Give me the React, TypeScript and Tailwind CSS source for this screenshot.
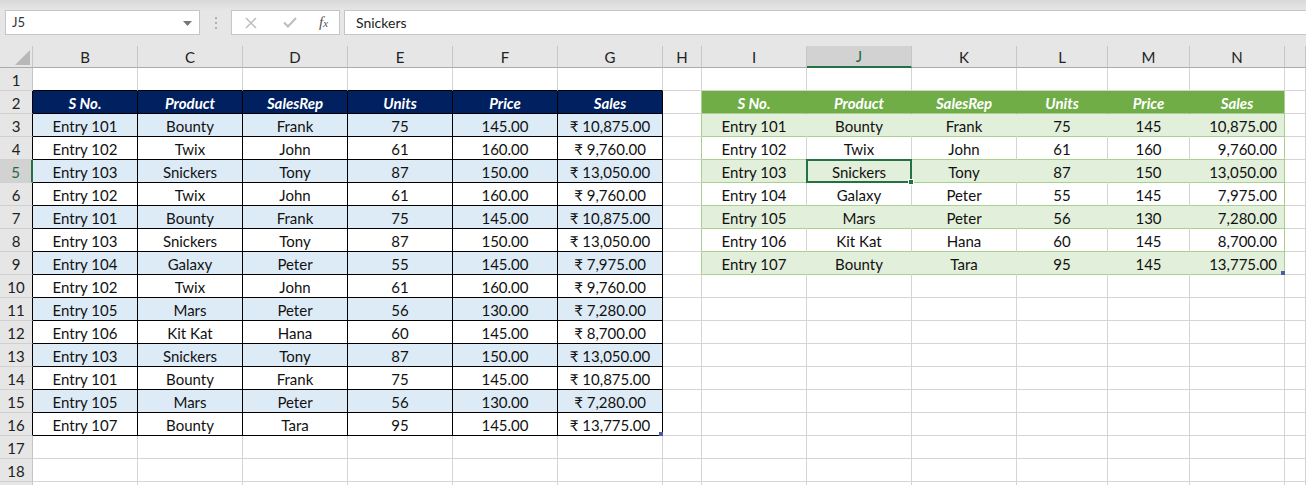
import React from 'react';

// ─── Data ───────────────────────────────────────────────────────

const COLS = [
  { key: 'B', w: 'w-[105px]' },
  { key: 'C', w: 'w-[105px]' },
  { key: 'D', w: 'w-[105px]' },
  { key: 'E', w: 'w-[105px]' },
  { key: 'F', w: 'w-[105px]' },
  { key: 'G', w: 'w-[105px]' },
  { key: 'H', w: 'w-[39px]' },
  { key: 'I', w: 'w-[105px]' },
  { key: 'J', w: 'w-[105px]' },
  { key: 'K', w: 'w-[105px]' },
  { key: 'L', w: 'w-[91px]' },
  { key: 'M', w: 'w-[82px]' },
  { key: 'N', w: 'w-[95px]' },
  { key: '', w: 'flex-1' },
];

const HEADERS = ['S No.', 'Product', 'SalesRep', 'Units', 'Price', 'Sales'];

const LEFT: string[][] = [
  ['Entry 101', 'Bounty', 'Frank', '75', '145.00', '₹ 10,875.00'],
  ['Entry 102', 'Twix', 'John', '61', '160.00', '₹ 9,760.00'],
  ['Entry 103', 'Snickers', 'Tony', '87', '150.00', '₹ 13,050.00'],
  ['Entry 102', 'Twix', 'John', '61', '160.00', '₹ 9,760.00'],
  ['Entry 101', 'Bounty', 'Frank', '75', '145.00', '₹ 10,875.00'],
  ['Entry 103', 'Snickers', 'Tony', '87', '150.00', '₹ 13,050.00'],
  ['Entry 104', 'Galaxy', 'Peter', '55', '145.00', '₹ 7,975.00'],
  ['Entry 102', 'Twix', 'John', '61', '160.00', '₹ 9,760.00'],
  ['Entry 105', 'Mars', 'Peter', '56', '130.00', '₹ 7,280.00'],
  ['Entry 106', 'Kit Kat', 'Hana', '60', '145.00', '₹ 8,700.00'],
  ['Entry 103', 'Snickers', 'Tony', '87', '150.00', '₹ 13,050.00'],
  ['Entry 101', 'Bounty', 'Frank', '75', '145.00', '₹ 10,875.00'],
  ['Entry 105', 'Mars', 'Peter', '56', '130.00', '₹ 7,280.00'],
  ['Entry 107', 'Bounty', 'Tara', '95', '145.00', '₹ 13,775.00'],
];

const RIGHT: string[][] = [
  ['Entry 101', 'Bounty', 'Frank', '75', '145', '10,875.00'],
  ['Entry 102', 'Twix', 'John', '61', '160', '9,760.00'],
  ['Entry 103', 'Snickers', 'Tony', '87', '150', '13,050.00'],
  ['Entry 104', 'Galaxy', 'Peter', '55', '145', '7,975.00'],
  ['Entry 105', 'Mars', 'Peter', '56', '130', '7,280.00'],
  ['Entry 106', 'Kit Kat', 'Hana', '60', '145', '8,700.00'],
  ['Entry 107', 'Bounty', 'Tara', '95', '145', '13,775.00'],
];

// row 19 only peeks in at the bottom edge, so it carries no label
const ROWS = Array.from({ length: 19 }, (_, i) => i + 1);

// ─── Cell rules ─────────────────────────────────────────────────

function cellSpec(r: number, c: number): { text: string; cls: string } {
  const inLeft = c <= 5;
  const inRight = c >= 7 && c <= 12;

  if (inLeft) {
    if (r === 1) return { text: '', cls: 'border-r-[#d4d4d4] border-b-black' };
    if (r === 2)
      return {
        text: HEADERS[c],
        cls: 'bg-[#002060] border-black text-white font-bold italic justify-center',
      };
    if (r <= 16) {
      const bg = r % 2 === 1 ? 'bg-[#ddebf7]' : 'bg-white';
      return { text: LEFT[r - 3][c], cls: `${bg} border-black justify-center` };
    }
  }

  if (c === 6 && r >= 2 && r <= 9)
    return { text: '', cls: 'border-r-[#a9d08e] border-b-[#d4d4d4]' };

  if (inRight && r >= 2 && r <= 9) {
    const i = c - 7;
    const last = i === 5;
    if (r === 2)
      return {
        text: HEADERS[i],
        cls: `bg-[#70ad47] border-b-[#a9d08e] text-white font-bold italic justify-center ${last ? 'border-r-[#a9d08e]' : 'border-r-[#70ad47]'}`,
      };
    const odd = r % 2 === 1;
    const fill = odd ? 'bg-[#e2efda]' : 'bg-white';
    const side = last ? 'border-r-[#a9d08e]' : odd ? 'border-r-[#e2efda]' : 'border-r-[#d4d4d4]';
    const align = last ? 'justify-end pr-[7px]' : 'justify-center';
    return { text: RIGHT[r - 3][i], cls: `${fill} ${side} border-b-[#a9d08e] ${align}` };
  }

  return { text: '', cls: 'border-[#d4d4d4]' };
}

// ─── Formula bar ────────────────────────────────────────────────

function FormulaBar() {
  return (
    <div className="flex h-[26px] items-start pl-[5px]">
      <div className="relative flex h-[25px] w-[195px] items-center border border-[#c6c6c6] bg-white pl-[6px] text-[13px] text-[#333]">
        J5
        <svg className="absolute right-[7px] top-[10px]" width="9" height="5" viewBox="0 0 9 5">
          <path d="M0 0H9L4.5 5Z" fill="#777" />
        </svg>
      </div>
      <div className="flex h-[25px] w-[31px] flex-col items-center justify-center gap-[3px]">
        <span className="h-[2px] w-[2px] bg-[#b0b0b0]" />
        <span className="h-[2px] w-[2px] bg-[#b0b0b0]" />
        <span className="h-[2px] w-[2px] bg-[#b0b0b0]" />
      </div>
      <div className="flex h-[25px] w-[109px] items-center border border-[#c6c6c6] bg-white">
        <svg className="ml-[13px]" width="12" height="12" viewBox="0 0 12 12">
          <path d="M1 1L11 11M11 1L1 11" stroke="#bdbdbd" strokeWidth="1.5" />
        </svg>
        <svg className="ml-[26px]" width="14" height="11" viewBox="0 0 14 11">
          <path d="M1 5.5L5 9.5L13 1" stroke="#bdbdbd" strokeWidth="2" fill="none" />
        </svg>
        <span className="ml-[22px] font-['Liberation_Serif',serif] text-[15px] italic leading-none text-[#555]">
          f<span className="text-[11px]">x</span>
        </span>
      </div>
      <div className="ml-[4px] flex h-[25px] flex-1 items-center border border-r-0 border-[#c6c6c6] bg-white pl-[11px] text-[14px] text-[#222]">
        Snickers
      </div>
    </div>
  );
}

// ─── Sheet ──────────────────────────────────────────────────────

function ColumnHeaders() {
  return (
    <div className="flex h-[22px] bg-[#e6e6e6]">
      <div className="relative w-[33px] shrink-0 border-r border-b border-r-[#c6c6c6] border-b-[#ababab]">
        <svg className="absolute left-[15px] top-[4px]" width="15" height="15" viewBox="0 0 15 15">
          <path d="M15 0V15H0Z" fill="#b8b8b8" />
        </svg>
      </div>
      {COLS.map((col, i) =>
        col.key === 'J' ? (
          <div
            key={i}
            className={`${col.w} flex shrink-0 items-center justify-center border-r border-r-[#c6c6c6] border-b-2 border-b-[#217346] bg-[#d2d2d2] pt-[1px] text-[#1e6b41]`}
          >
            {col.key}
          </div>
        ) : (
          <div
            key={i}
            className={`${col.w} flex shrink-0 items-center justify-center border-r border-b border-r-[#c6c6c6] border-b-[#ababab] pt-[1px] text-[#222]`}
          >
            {col.key}
          </div>
        )
      )}
    </div>
  );
}

function RowHeader({ r }: { r: number }) {
  if (r === 5)
    return (
      <div className="flex w-[33px] shrink-0 items-center justify-center border-r-2 border-b border-r-[#217346] border-b-[#d0d0d0] bg-[#d2d2d2] pt-[2px] text-[#1e6b41]">
        {r}
      </div>
    );
  const side = r >= 2 && r <= 16 ? 'border-r-black' : 'border-r-[#c6c6c6]';
  return (
    <div
      className={`flex w-[33px] shrink-0 items-center justify-center border-r border-b ${side} border-b-[#d0d0d0] bg-[#e6e6e6] pt-[2px] text-[#222]`}
    >
      {r <= 18 ? r : ''}
    </div>
  );
}

function SheetRow({ r }: { r: number }) {
  return (
    <div className="flex h-[23px] shrink-0">
      <RowHeader r={r} />
      {COLS.map((col, c) => {
        const spec = cellSpec(r, c);
        const selected = r === 5 && c === 8;
        const cornerMark = (r === 16 && c === 5) || (r === 9 && c === 12);
        return (
          <div
            key={c}
            className={`${col.w} relative flex shrink-0 items-center whitespace-nowrap border-r border-b px-[3px] pt-[2px] text-[#111] ${spec.cls}`}
          >
            {spec.text}
            {selected && (
              <>
                <div className="absolute -left-[1px] -top-[1px] -right-[1px] -bottom-[1px] z-10 border-2 border-[#217346]" />
                <div className="absolute -right-[3px] -bottom-[3px] z-20 h-[6px] w-[6px] border border-white bg-[#217346]" />
              </>
            )}
            {cornerMark && (
              <div className="absolute -right-[1px] -bottom-[1px] z-10 h-[4px] w-[4px] bg-[#4a5bab]" />
            )}
          </div>
        );
      })}
    </div>
  );
}

export default function App() {
  return (
    <div className="h-[485px] w-[1306px] overflow-hidden bg-[#e6e6e6] font-['Lato','Noto_Sans','DejaVu_Sans',sans-serif] text-[15px]">
      <div className="h-[10px] bg-gradient-to-b from-[#d8d8d8] to-[#e6e6e6]" />
      <FormulaBar />
      <div className="h-[10px]" />
      <ColumnHeaders />
      <div className="bg-white">
        {ROWS.map((r) => (
          <SheetRow key={r} r={r} />
        ))}
      </div>
    </div>
  );
}
